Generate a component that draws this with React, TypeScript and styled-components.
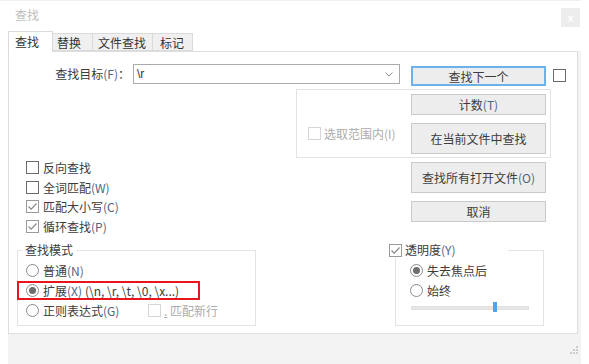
import styled, { createGlobalStyle } from 'styled-components';

const GlobalStyle = createGlobalStyle`
  html, body {
    margin: 0;
    padding: 0;
    background: #fff;
  }
  body {
    font-family: "Noto Sans CJK SC", "Noto Sans", sans-serif;
    font-size: 12px;
    color: #3c3c3c;
  }
`;

const Dialog = styled.div`
  width: 581px;
  height: 364px;
  box-sizing: border-box;
  border-top: 1px solid #f0f0f0;
  display: flex;
  flex-direction: column;
`;

const TitleBar = styled.div`
  height: 30px;
  display: flex;
  justify-content: space-between;
  padding-left: 15px;
`;

const Title = styled.span`
  color: #bdbdbd;
  line-height: 28px;
`;

const CloseButton = styled.div`
  width: 19px;
  height: 19px;
  margin: 7px 1px 0 0;
  background: #ededed;
  color: #fff;
  display: flex;
  align-items: center;
  justify-content: center;
  font: bold 11px "Liberation Sans", sans-serif;
`;

const TabStrip = styled.div`
  display: flex;
  align-items: flex-end;
  height: 20px;
  margin-left: 8px;
  position: relative;
  z-index: 1;
`;

const Tab = styled.div<{ $active?: boolean; $w: number; $pad: number }>`
  box-sizing: border-box;
  width: ${({ $w }) => $w}px;
  height: ${({ $active }) => ($active ? 21 : 18)}px;
  margin-bottom: ${({ $active }) => ($active ? -1 : 0)}px;
  margin-left: -1px;
  padding-left: ${({ $pad }) => $pad}px;
  border: 1px solid #dadada;
  border-bottom: ${({ $active }) => ($active ? 'none' : '1px solid #dadada')};
  background: ${({ $active }) => ($active ? '#fff' : '#f0f0f0')};
  line-height: ${({ $active }) => ($active ? 19 : 17)}px;
  color: #333;
  white-space: nowrap;
  &:first-child {
    margin-left: 0;
  }
`;

const Frame = styled.div`
  flex: 1;
  margin-left: 8px;
  background: #f3f3f3;
  display: flex;
  flex-direction: column;
`;

const Panel = styled.div`
  width: 570px;
  height: 283px;
  box-sizing: border-box;
  border: 1px solid #dedede;
  background: #fff;
`;

const Footer = styled.div`
  flex: 1;
  display: flex;
  justify-content: flex-end;
  align-items: flex-end;
  padding: 0 2px 9px 0;
`;

const TopRow = styled.div`
  margin-top: 12px;
  height: 22px;
  display: flex;
  align-items: flex-start;
`;

const FieldLabel = styled.label`
  width: 121px;
  margin-right: 3px;
  text-align: right;
  line-height: 20px;
  white-space: nowrap;
`;

const Combo = styled.div`
  box-sizing: border-box;
  width: 267px;
  height: 20px;
  border: 1px solid #ababab;
  display: flex;
  align-items: center;
  justify-content: space-between;
  padding: 0 6px 0 3px;
  font: 12px "Liberation Sans", sans-serif;
  color: #333;
`;

const Button = styled.button<{ $tall?: boolean; $focus?: boolean }>`
  box-sizing: border-box;
  width: 135px;
  height: ${({ $tall }) => ($tall ? 31 : 21)}px;
  padding: 0;
  border: ${({ $focus }) => ($focus ? '2px solid #6cb1ea' : '1px solid #cacaca')};
  background: #ededed;
  font: inherit;
  color: #3c3c3c;
  white-space: nowrap;
`;

const FindNext = styled(Button)`
  height: 20px;
  margin: 2px 0 0 11px;
`;

const SideCheck = styled.div`
  margin: 5px 0 0 7px;
  display: flex;
`;

const MiddleRow = styled.div`
  margin-top: 3px;
  display: flex;
`;

const LeftCol = styled.div`
  width: 287px;
  box-sizing: border-box;
  padding: 69px 0 0 17px;
`;

const CheckRow = styled.div`
  height: 19.5px;
  display: flex;
  align-items: center;
  gap: 4px;
  white-space: nowrap;
`;

const RightCol = styled.div`
  display: flex;
  flex-direction: column;
  align-items: flex-start;
`;

const SelectionGroup = styled.div`
  box-sizing: border-box;
  width: 255px;
  height: 69px;
  border: 1px solid #e3e3e3;
  display: flex;
  padding: 4px 0 0 11px;
`;

const SelectionCheck = styled.div`
  width: 103px;
  padding-top: 31px;
`;

const ButtonStack = styled.div`
  display: flex;
  flex-direction: column;
  gap: 8px;
`;

const SideButton = styled(Button)<{ $gap: number }>`
  margin: ${({ $gap }) => $gap}px 0 0 115px;
`;

const BottomRow = styled.div`
  margin-top: 6px;
  display: flex;
  padding-left: 8px;
`;

const Group = styled.fieldset<{ $w: number; $pad: number }>`
  box-sizing: border-box;
  width: ${({ $w }) => $w}px;
  min-width: 0;
  margin: 0;
  padding: 2px 0 0 ${({ $pad }) => $pad}px;
  border: 1px solid #e3e3e3;
`;

const TransGroup = styled(Group)`
  margin-left: 139px;
  padding-bottom: 5px;
`;

const Legend = styled.legend`
  margin-left: -4px;
  padding: 0 3px;
  line-height: 16px;
`;

const CheckLegend = styled.legend`
  box-sizing: border-box;
  width: 119px;
  margin-left: -21px;
  padding: 0;
  line-height: 16px;
  display: flex;
  align-items: center;
  gap: 3px;
`;

const RadioRow = styled.div<{ $marked?: boolean }>`
  position: relative;
  height: 20px;
  display: flex;
  align-items: center;
  white-space: nowrap;
  &::before {
    content: '';
    display: ${({ $marked }) => ($marked ? 'block' : 'none')};
    position: absolute;
    left: -9px;
    top: 1px;
    width: 183px;
    height: 19px;
    box-sizing: border-box;
    border: 2px solid #e8161c;
  }
`;

const RadioItem = styled.span<{ $w?: number }>`
  display: flex;
  align-items: center;
  gap: 4px;
  width: ${({ $w }) => ($w ? `${$w}px` : 'auto')};
`;

const Circle = styled.span<{ $on?: boolean }>`
  box-sizing: border-box;
  width: 13px;
  height: 13px;
  border-radius: 50%;
  border: 1px solid #8a8a8a;
  background: #fff;
  display: flex;
  align-items: center;
  justify-content: center;
  &::after {
    content: '';
    display: ${({ $on }) => ($on ? 'block' : 'none')};
    width: 7px;
    height: 7px;
    border-radius: 50%;
    background: #6e6e6e;
  }
`;

const Box = styled.span<{ $checked?: boolean; $disabled?: boolean }>`
  box-sizing: border-box;
  flex: none;
  width: 13px;
  height: 13px;
  border: 1px solid
    ${({ $checked, $disabled }) => ($disabled ? '#d6d6d6' : $checked ? '#9a9a9a' : '#6a6a6a')};
  background: #fff;
  display: flex;
  align-items: center;
  justify-content: center;
`;

const Muted = styled.span`
  color: #acacac;
  display: flex;
  align-items: center;
  gap: 3px;
`;

const Key = styled.span`
  color: #4f6384;
`;

const Plain = styled.span`
  margin-left: 3px;
`;

const Dot = styled.span`
  text-decoration: underline;
`;

const Slider = styled.div`
  position: relative;
  width: 118px;
  height: 4px;
  margin: 6px 0 0 1px;
  background: #e7e7e7;
  border: 1px solid #e0e0e0;
  box-sizing: border-box;
`;

const Thumb = styled.span`
  position: absolute;
  left: 81px;
  top: -5px;
  width: 4px;
  height: 10px;
  background: #4fa3ea;
`;

const SliderRow = styled.div`
  height: 14px;
`;

const Check = ({ checked, disabled }: { checked?: boolean; disabled?: boolean }) => (
  <Box $checked={checked} $disabled={disabled}>
    {checked && (
      <svg width="11" height="11" viewBox="0 0 11 11">
        <path d="M1.5 5.5 L4.2 8.2 L9.5 2.5" fill="none" stroke="#8a8a8a" strokeWidth="1.2" />
      </svg>
    )}
  </Box>
);

const Grip = () => (
  <svg width="9" height="9" viewBox="0 0 9 9">
    {[
      [6, 0],
      [3, 3],
      [6, 3],
      [0, 6],
      [3, 6],
      [6, 6],
    ].map(([x, y]) => (
      <rect key={`${x}-${y}`} x={x} y={y} width="2" height="2" fill="#cdcdcd" />
    ))}
  </svg>
);

const tabs = [
  { label: '查找', w: 45, pad: 6, active: true },
  { label: '替换', w: 41, pad: 4 },
  { label: '文件查找', w: 61, pad: 5 },
  { label: '标记', w: 41, pad: 7 },
];

const options = [
  { label: '反向查找', checked: false },
  { label: '全词匹配', key: '(W)', checked: false },
  { label: '匹配大小写', key: '(C)', checked: true },
  { label: '循环查找', key: '(P)', checked: true },
];

const App = () => (
  <>
    <GlobalStyle />
    <Dialog>
      <TitleBar>
        <Title>查找</Title>
        <CloseButton>x</CloseButton>
      </TitleBar>
      <TabStrip>
        {tabs.map((t) => (
          <Tab key={t.label} $active={t.active} $w={t.w} $pad={t.pad}>
            {t.label}
          </Tab>
        ))}
      </TabStrip>
      <Frame>
        <Panel>
          <TopRow>
            <FieldLabel>
              查找目标<Key>(F)</Key>：
            </FieldLabel>
            <Combo>
              <span>\r</span>
              <svg width="8" height="5" viewBox="0 0 8 5">
                <path d="M0.5 0.5 L4 4 L7.5 0.5" fill="none" stroke="#8c8c8c" />
              </svg>
            </Combo>
            <FindNext $focus>查找下一个</FindNext>
            <SideCheck>
              <Check />
            </SideCheck>
          </TopRow>
          <MiddleRow>
            <LeftCol>
              {options.map((o) => (
                <CheckRow key={o.label}>
                  <Check checked={o.checked} />
                  <span>
                    {o.label}
                    {o.key && <Key>{o.key}</Key>}
                  </span>
                </CheckRow>
              ))}
            </LeftCol>
            <RightCol>
              <SelectionGroup>
                <SelectionCheck>
                  <Muted>
                    <Check disabled />
                    <span>选取范围内(I)</span>
                  </Muted>
                </SelectionCheck>
                <ButtonStack>
                  <Button>
                    计数<Key>(T)</Key>
                  </Button>
                  <Button $tall>在当前文件中查找</Button>
                </ButtonStack>
              </SelectionGroup>
              <SideButton $tall $gap={4}>
                查找所有打开文件<Key>(O)</Key>
              </SideButton>
              <SideButton $gap={8}>取消</SideButton>
            </RightCol>
          </MiddleRow>
          <BottomRow>
            <Group $w={239} $pad={8}>
              <Legend>查找模式</Legend>
              <RadioRow>
                <RadioItem>
                  <Circle />
                  <span>
                    普通<Key>(N)</Key>
                  </span>
                </RadioItem>
              </RadioRow>
              <RadioRow $marked>
                <RadioItem>
                  <Circle $on />
                  <span>
                    扩展<Key>(X)</Key>
                    <Plain>(\n, \r, \t, \0, \x...)</Plain>
                  </span>
                </RadioItem>
              </RadioRow>
              <RadioRow>
                <RadioItem $w={122}>
                  <Circle />
                  <span>
                    正则表达式<Key>(G)</Key>
                  </span>
                </RadioItem>
                <Muted>
                  <Check disabled />
                  <span>
                    <Dot>.</Dot> 匹配新行
                  </span>
                </Muted>
              </RadioRow>
            </Group>
            <TransGroup $w={149} $pad={14}>
              <CheckLegend>
                <Check checked />
                <span>
                  透明度<Key>(Y)</Key>
                </span>
              </CheckLegend>
              <RadioRow>
                <RadioItem>
                  <Circle $on />
                  <span>失去焦点后</span>
                </RadioItem>
              </RadioRow>
              <RadioRow>
                <RadioItem>
                  <Circle />
                  <span>始终</span>
                </RadioItem>
              </RadioRow>
              <SliderRow>
                <Slider>
                  <Thumb />
                </Slider>
              </SliderRow>
            </TransGroup>
          </BottomRow>
        </Panel>
        <Footer>
          <Grip />
        </Footer>
      </Frame>
    </Dialog>
  </>
);

export default App;
